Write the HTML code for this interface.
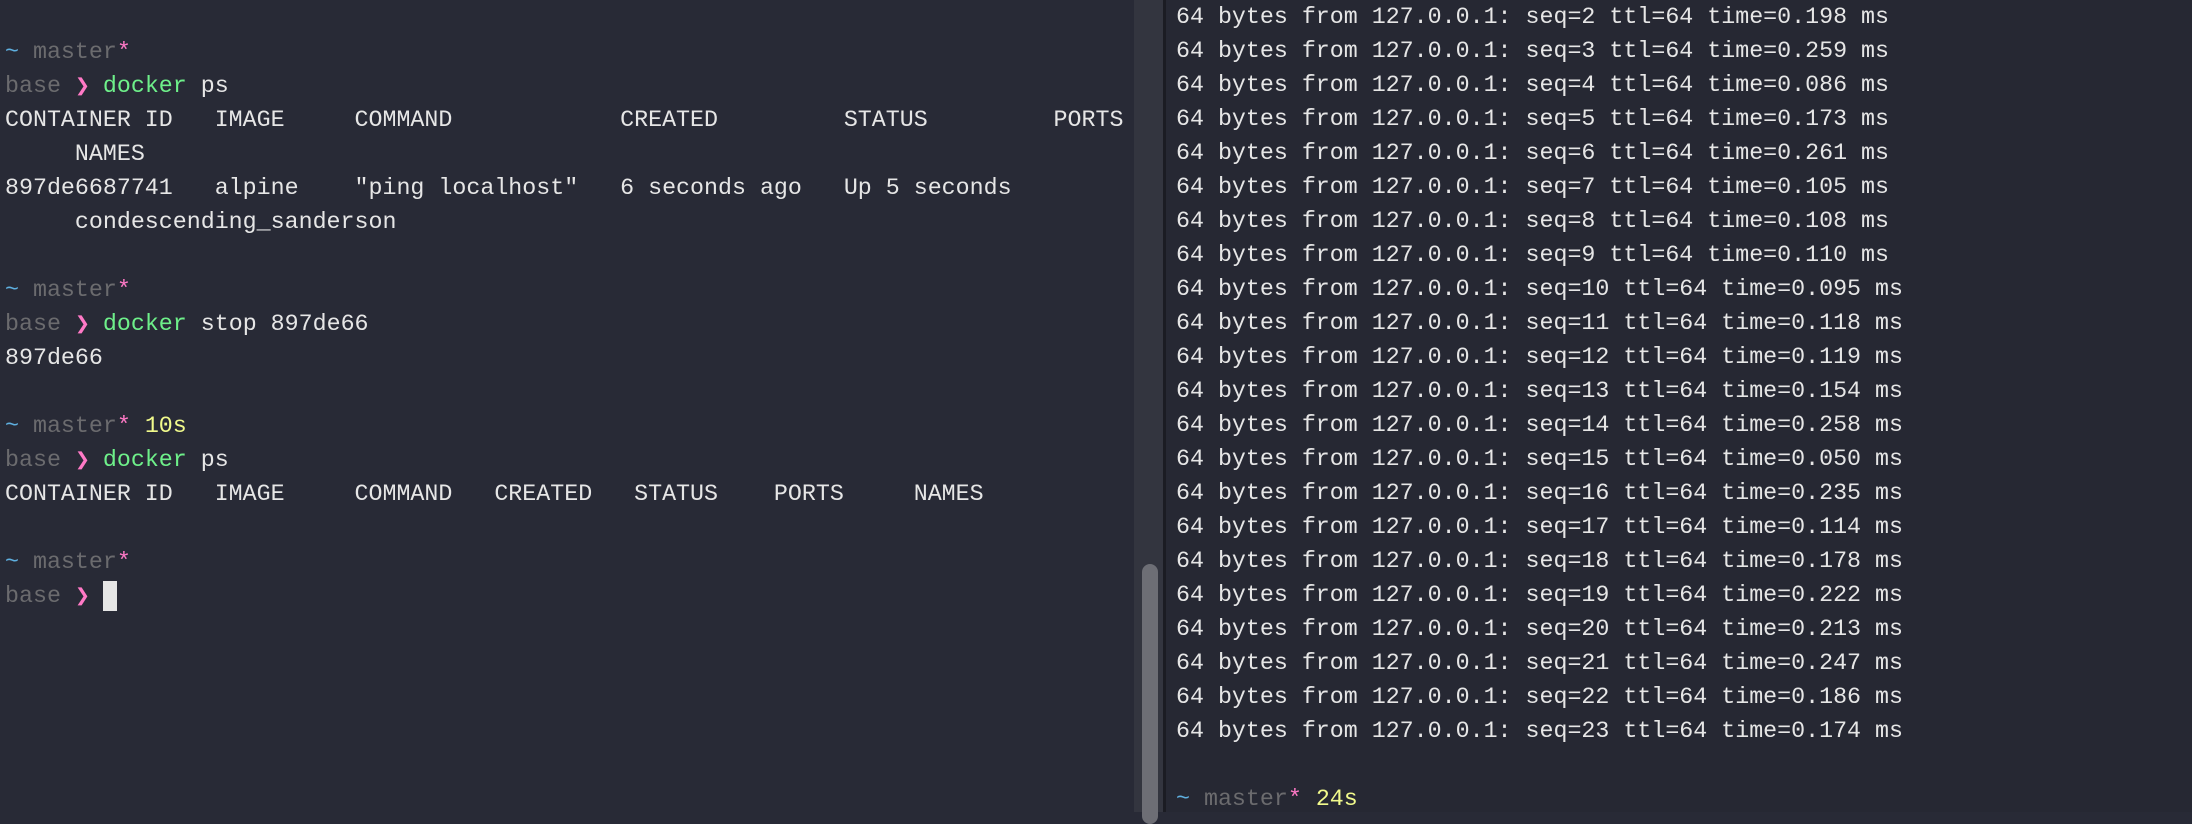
<!DOCTYPE html>
<html><head><meta charset="utf-8"><style>
html,body{margin:0;padding:0;width:2192px;height:812px;overflow:hidden;background:#282a36;}
.p{position:absolute;top:0;height:812px;font-family:"Liberation Mono",monospace;font-size:23.3px;line-height:34px;color:#e6e6e6;white-space:pre;}
#l{left:0;width:1134px;background:#282a36;}
#l .t{position:absolute;left:5px;top:35px;}
#r{left:1166px;width:1026px;background:#262833;}
#r .t{position:absolute;left:10px;top:0;}
#track{position:absolute;left:1134px;top:0;width:29px;height:812px;background:#33353f;}
#thumb{position:absolute;left:1142px;top:564px;width:16px;height:260px;background:#6d6e75;border-radius:8px;}
#div{position:absolute;left:1163px;top:0;width:3px;height:812px;background:#1b1c23;}
.g{color:#6b6b6e}.c{color:#5fb0e0}.k{color:#ff79c6}.gr{color:#6ef08a}.y{color:#f1fa8c}
.a{color:#ff79c6;display:inline-block;width:14px;height:34px;line-height:36px;font-size:18px;text-align:center;vertical-align:top;}
.cur{display:inline-block;width:14px;height:30px;background:#e6e6e6;vertical-align:top;margin-top:2px;}
</style></head><body>
<div class="p" id="l"><div class="t"><span class="c">~</span> <span class="g">master</span><span class="k">*</span>
<span class="g">base</span> <span class="a">❯</span> <span class="gr">docker</span> ps
CONTAINER ID   IMAGE     COMMAND            CREATED         STATUS         PORTS
     NAMES
897de6687741   alpine    "ping localhost"   6 seconds ago   Up 5 seconds
     condescending_sanderson

<span class="c">~</span> <span class="g">master</span><span class="k">*</span>
<span class="g">base</span> <span class="a">❯</span> <span class="gr">docker</span> stop 897de66
897de66

<span class="c">~</span> <span class="g">master</span><span class="k">*</span> <span class="y">10s</span>
<span class="g">base</span> <span class="a">❯</span> <span class="gr">docker</span> ps
CONTAINER ID   IMAGE     COMMAND   CREATED   STATUS    PORTS     NAMES

<span class="c">~</span> <span class="g">master</span><span class="k">*</span>
<span class="g">base</span> <span class="a">❯</span> <span class="cur"></span></div></div>
<div id="track"></div><div id="thumb"></div><div id="div"></div>
<div class="p" id="r"><div class="t">64 bytes from 127.0.0.1: seq=2 ttl=64 time=0.198 ms
64 bytes from 127.0.0.1: seq=3 ttl=64 time=0.259 ms
64 bytes from 127.0.0.1: seq=4 ttl=64 time=0.086 ms
64 bytes from 127.0.0.1: seq=5 ttl=64 time=0.173 ms
64 bytes from 127.0.0.1: seq=6 ttl=64 time=0.261 ms
64 bytes from 127.0.0.1: seq=7 ttl=64 time=0.105 ms
64 bytes from 127.0.0.1: seq=8 ttl=64 time=0.108 ms
64 bytes from 127.0.0.1: seq=9 ttl=64 time=0.110 ms
64 bytes from 127.0.0.1: seq=10 ttl=64 time=0.095 ms
64 bytes from 127.0.0.1: seq=11 ttl=64 time=0.118 ms
64 bytes from 127.0.0.1: seq=12 ttl=64 time=0.119 ms
64 bytes from 127.0.0.1: seq=13 ttl=64 time=0.154 ms
64 bytes from 127.0.0.1: seq=14 ttl=64 time=0.258 ms
64 bytes from 127.0.0.1: seq=15 ttl=64 time=0.050 ms
64 bytes from 127.0.0.1: seq=16 ttl=64 time=0.235 ms
64 bytes from 127.0.0.1: seq=17 ttl=64 time=0.114 ms
64 bytes from 127.0.0.1: seq=18 ttl=64 time=0.178 ms
64 bytes from 127.0.0.1: seq=19 ttl=64 time=0.222 ms
64 bytes from 127.0.0.1: seq=20 ttl=64 time=0.213 ms
64 bytes from 127.0.0.1: seq=21 ttl=64 time=0.247 ms
64 bytes from 127.0.0.1: seq=22 ttl=64 time=0.186 ms
64 bytes from 127.0.0.1: seq=23 ttl=64 time=0.174 ms

<span class="c">~</span> <span class="g">master</span><span class="k">*</span> <span class="y">24s</span></div></div>
</body></html>
